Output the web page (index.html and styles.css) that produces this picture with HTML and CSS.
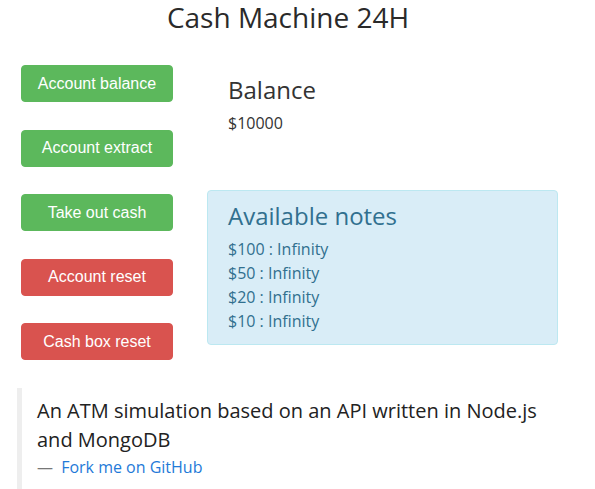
FILE: index.html
```html
<!DOCTYPE html>
<html>
<head>
<meta charset="utf-8">
<link rel="stylesheet" href="styles.css">
</head>
<body>
<h1 class="title">Cash Machine 24H</h1>
<div class="main">
  <div class="actions">
    <button class="btn btn-green">Account balance</button>
    <button class="btn btn-green">Account extract</button>
    <button class="btn btn-green">Take out cash</button>
    <button class="btn btn-red">Account reset</button>
    <button class="btn btn-red">Cash box reset</button>
  </div>
  <div class="info">
    <div class="balance">
      <h3 class="heading">Balance</h3>
      <p class="amount">$10000</p>
    </div>
    <div class="notes">
      <h3 class="heading">Available notes</h3>
      <p class="note">$100 : Infinity</p>
      <p class="note">$50 : Infinity</p>
      <p class="note">$20 : Infinity</p>
      <p class="note">$10 : Infinity</p>
    </div>
  </div>
</div>
<blockquote class="quote">
  <p class="quote-text">An ATM simulation based on an API written in Node.js and MongoDB</p>
  <footer class="quote-footer">— <a class="link" href="#">Fork me on GitHub</a></footer>
</blockquote>
</body>
</html>
```
FILE: styles.css
```css
html, body {
  margin: 0;
  padding: 0;
  background: #fff;
}
body {
  font-family: "Open Sans", "DejaVu Sans", sans-serif;
  color: #333;
  font-size: 16px;
  line-height: 24px;
}
.title {
  width: 576px;
  margin: 2px 0 0;
  text-align: center;
  font-size: 28px;
  font-weight: 400;
  line-height: 31px;
  color: #2a2a2a;
}
.main {
  display: flex;
  padding-left: 21px;
  margin-top: 32px;
}
.actions {
  display: flex;
  flex-direction: column;
  gap: 27.5px;
  width: 152px;
}
.btn {
  display: block;
  width: 152px;
  height: 37px;
  padding: 0;
  border: 1px solid transparent;
  border-radius: 4px;
  font-family: "Liberation Sans", Arial, sans-serif;
  font-size: 16px;
  color: #fff;
  text-align: center;
}
.btn-green {
  background: #5cb85c;
  border-color: #5cb85c;
}
.btn-red {
  background: #d9534f;
  border-color: #d9534f;
}
.info {
  margin-left: 34px;
  width: 351px;
}
.balance {
  padding: 12px 0 0 21px;
  height: 113px;
}
.heading {
  margin: 0 0 8px;
  font-size: 24px;
  font-weight: 400;
  line-height: 26.4px;
}
.amount {
  margin: 0;
  font-size: 16px;
  line-height: 24px;
}
.notes {
  background: #d9edf7;
  border: 1px solid #bce8f1;
  border-radius: 4px;
  color: #31708f;
  padding: 12px 20px 11px;
}
.notes .heading {
  margin-bottom: 8px;
}
.note {
  margin: 0;
  font-size: 16px;
  line-height: 24px;
}
.quote {
  margin: 28px 0 0 17px;
  border-left: 5px solid #eee;
  padding: 8px 15px 20px;
  width: 530px;
}
.quote-text {
  margin: 0;
  font-size: 20px;
  line-height: 29px;
  color: #222;
}
.quote-footer {
  font-size: 16px;
  line-height: 24px;
  color: #777;
  margin-top: 1px;
}
.link {
  color: #1f7ad8;
  text-decoration: none;
  margin-left: 4px;
}
```
